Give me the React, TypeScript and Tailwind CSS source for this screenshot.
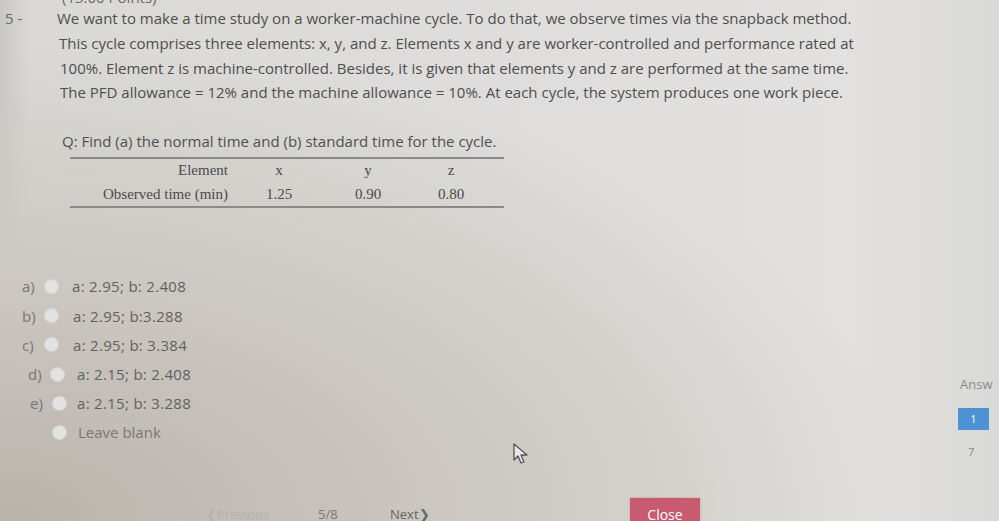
import React from "react";

const options = [
  { l: "a)", t: "a: 2.95; b: 2.408", lx: 22, tx: 72 },
  { l: "b)", t: "a: 2.95; b:3.288", lx: 22, tx: 73 },
  { l: "c)", t: "a: 2.95; b: 3.384", lx: 22, tx: 73 },
  { l: "d)", t: "a: 2.15; b: 2.408", lx: 28, tx: 77 },
  { l: "e)", t: "a: 2.15; b: 3.288", lx: 30, tx: 77 },
  { l: "", t: "Leave blank", lx: 30, tx: 78 },
];

export default function App() {
  return (
    <div
      className="w-[999px] h-[521px] overflow-hidden flex flex-col bg-[#dcdbd8] bg-[radial-gradient(ellipse_at_0%_100%,#b9b3ab_0%,#cdc9c3_35%,rgba(220,219,216,0)_65%),linear-gradient(90deg,#c9c8c5_0%,#dad9d6_3%,#dedddb_50%,#e2e1df_85%,#d9d9d7_100%)] text-[#4e4e4e]"
      style={{ fontFamily: '"Open Sans", "Noto Sans", sans-serif' }}
    >
      <div className="flex flex-1">
        <div className="flex-1 flex flex-col">
          <div className="pl-[62px] mt-[-15px] h-[20px] text-[15px] leading-[24px] text-[#6a6a6a]">(13.00 Points)</div>
          <div className="flex text-[15px] leading-[24.8px] mt-[1px]">
            <div className="w-[57px] pl-[5px] text-[#6a6a6a]">5 -</div>
            <div className="w-[880px]">
              <p>We want to make a time study on a worker-machine cycle. To do that, we observe times via the snapback method.</p>
              <p className="pl-[2px]">This cycle comprises three elements: x, y, and z. Elements x and y are worker-controlled and performance rated at</p>
              <p className="pl-[3px]">100%. Element z is machine-controlled. Besides, it is given that elements y and z are performed at the same time.</p>
              <p className="pl-[3px]">The PFD allowance = 12% and the machine allowance = 10%. At each cycle, the system produces one work piece.</p>
            </div>
          </div>
          <div className="pl-[62px] mt-[26px] text-[15px] leading-[20px] text-[#505050]">
            Q: Find (a) the normal time and (b) standard time for the cycle.
          </div>
          <div
            className="ml-[70px] mt-[6px] w-[434px] border-t-[2px] border-b-[2px] border-[#8a8a8a] text-[15px] text-[#4a4a4a]"
            style={{ fontFamily: '"Liberation Serif", "DejaVu Serif", serif' }}
          >
            <div className="grid grid-cols-[158px_102px_76px_98px] leading-[23.5px]">
              <div className="text-right">Element</div>
              <div className="text-center">x</div>
              <div className="text-center">y</div>
              <div className="text-center pr-[8px]">z</div>
            </div>
            <div className="grid grid-cols-[158px_102px_76px_98px] leading-[23.5px]">
              <div className="text-right">Observed time (min)</div>
              <div className="text-center">1.25</div>
              <div className="text-center">0.90</div>
              <div className="text-center pr-[8px]">0.80</div>
            </div>
          </div>
          <div className="mt-[64px] flex flex-col text-[15px] text-[#616161]">
            {options.map((o, i) => (
              <div key={i} className="flex items-center h-[29.1px]">
                <div className="shrink-0" style={{ width: o.lx }} />
                <span className="w-[22px] text-[#767676]">{o.l}</span>
                <span className="w-[15px] h-[15px] rounded-full border border-[#d6d6d6] bg-[#e2e2e1] shrink-0" />
                <span className="shrink-0" style={{ width: o.tx - o.lx - 37 }} />
                <span className={i === 5 ? "text-[#787878]" : "tracking-[0.3px]"}>{o.t}</span>
              </div>
            ))}
          </div>
          <div className="flex-1" />
          <div className="flex items-end h-[24px] text-[13px] leading-[20px]">
            <div className="w-[206px]" />
            <span className="text-[#b2b2b2] w-[112px] mb-[-3px]">❮Previous</span>
            <span className="text-[#777] w-[72px] mb-[-3px]">5/8</span>
            <span className="text-[#666] w-[240px] mb-[-3px]">Next❯</span>
            <div className="w-[70px] h-[23px] bg-[#c85b6f] text-white text-[14px] flex items-start justify-center pt-[7px] leading-[20px] shadow-[0_0_2px_rgba(200,90,110,0.5)]">
              Close
            </div>
          </div>
        </div>
        <div className="w-[41px] flex flex-col items-start pt-[374px] text-[13px]">
          <span className="text-[#8a8a8a] leading-[20px] ml-[2px]">Answ</span>
          <div className="mt-[14px] w-[31px] h-[22px] bg-[#4d92d2] text-white text-[11px] flex items-center justify-center">1</div>
          <span className="mt-[14px] ml-[10px] text-[#8a8a8a] text-[11px]">7</span>
        </div>
      </div>
      <svg className="absolute left-[513px] top-[443px]" width="16" height="22" viewBox="0 0 16 22">
        <path d="M1 1 L1 17 L5 13 L8 20 L11 19 L8 12 L14 12 Z" fill="#e8e8e8" stroke="#555" strokeWidth="1.3" strokeLinejoin="round" />
      </svg>
    </div>
  );
}
